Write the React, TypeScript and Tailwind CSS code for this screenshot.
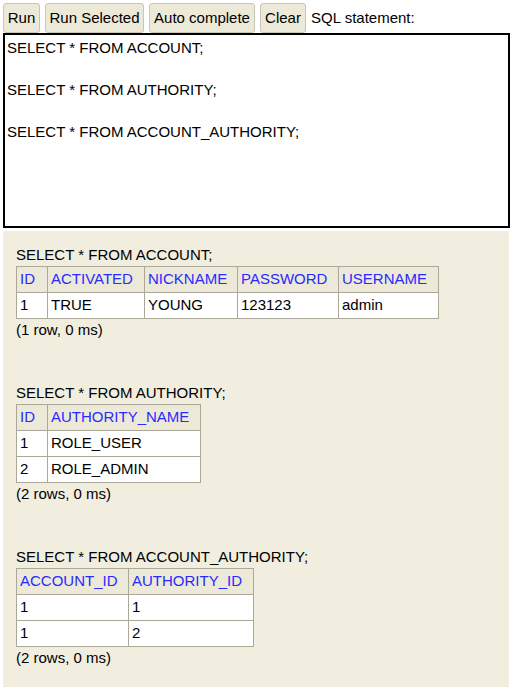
import React from "react";

type Result = {
	sql: string;
	columns: { name: string; width: string }[];
	rows: string[][];
	status: string;
};

const SQL_TEXT = "SELECT * FROM ACCOUNT;\n\nSELECT * FROM AUTHORITY;\n\nSELECT * FROM ACCOUNT_AUTHORITY;";

const RESULTS: Result[] = [
	{
		sql: "SELECT * FROM ACCOUNT;",
		columns: [
			{ name: "ID", width: "w-[31px]" },
			{ name: "ACTIVATED", width: "w-[97px]" },
			{ name: "NICKNAME", width: "w-[93px]" },
			{ name: "PASSWORD", width: "w-[101px]" },
			{ name: "USERNAME", width: "w-[100px]" },
		],
		rows: [["1", "TRUE", "YOUNG", "123123", "admin"]],
		status: "(1 row, 0 ms)",
	},
	{
		sql: "SELECT * FROM AUTHORITY;",
		columns: [
			{ name: "ID", width: "w-[31px]" },
			{ name: "AUTHORITY_NAME", width: "w-[153px]" },
		],
		rows: [
			["1", "ROLE_USER"],
			["2", "ROLE_ADMIN"],
		],
		status: "(2 rows, 0 ms)",
	},
	{
		sql: "SELECT * FROM ACCOUNT_AUTHORITY;",
		columns: [
			{ name: "ACCOUNT_ID", width: "w-[112px]" },
			{ name: "AUTHORITY_ID", width: "w-[125px]" },
		],
		rows: [
			["1", "1"],
			["1", "2"],
		],
		status: "(2 rows, 0 ms)",
	},
];

function ToolButton({ label, width }: { label: string; width: string }) {
	return (
		<button
			type="button"
			className={`flex h-[30px] shrink-0 items-center justify-center whitespace-nowrap rounded-[3px] border border-[#c9c6b6] bg-[#ece9d8] px-0 text-black ${width}`}
		>
			{label}
		</button>
	);
}

function ResultTable({ result }: { result: Result }) {
	return (
		<div className="flex flex-col items-start">
			<div className="h-[18px] whitespace-nowrap leading-[18px]">{result.sql}</div>
			<table className="mt-[2px] table-fixed border-collapse">
				<thead>
					<tr>
						{result.columns.map((col) => (
							<th
								key={col.name}
								className={`h-[26px] whitespace-nowrap border border-[#aca899] bg-[#ece9d8] px-[3px] text-left font-normal text-[#2a2aff] ${col.width}`}
							>
								{col.name}
							</th>
						))}
					</tr>
				</thead>
				<tbody>
					{result.rows.map((row, i) => (
						<tr key={i}>
							{row.map((cell, j) => (
								<td key={j} className="h-[26px] border border-[#aca899] bg-white px-[3px]">
									{cell}
								</td>
							))}
						</tr>
					))}
				</tbody>
			</table>
			<div className="mt-[2px] h-[18px] whitespace-nowrap leading-[18px]">{result.status}</div>
		</div>
	);
}

export default function App() {
	return (
		<div className="h-[687px] w-[512px] overflow-hidden bg-white font-['Liberation_Sans',Arial,sans-serif] text-[15px] text-black">
			{/* toolbar */}
			<div className="flex h-[33px] items-start gap-[5px] pl-[3px] pt-[3px]">
				<ToolButton label="Run" width="w-[37px]" />
				<ToolButton label="Run Selected" width="w-[99px]" />
				<ToolButton label="Auto complete" width="w-[106px]" />
				<ToolButton label="Clear" width="w-[46px]" />
				<span className="flex h-[30px] items-center whitespace-nowrap">SQL statement:</span>
			</div>

			{/* sql editor */}
			<div className="pl-[3px]">
				<textarea
					readOnly
					value={SQL_TEXT}
					className="block h-[195px] w-[507px] resize-none border-2 border-black bg-white px-[2px] pt-[2px] leading-[21px] text-black outline-none"
				/>
			</div>

			{/* results */}
			<div className="ml-[3px] mt-[3px] flex h-[460px] w-[506px] flex-col items-start gap-[45px] bg-[#f1eee0] pl-[13px] pt-[15px]">
				{RESULTS.map((r) => (
					<ResultTable key={r.sql} result={r} />
				))}
			</div>
		</div>
	);
}
